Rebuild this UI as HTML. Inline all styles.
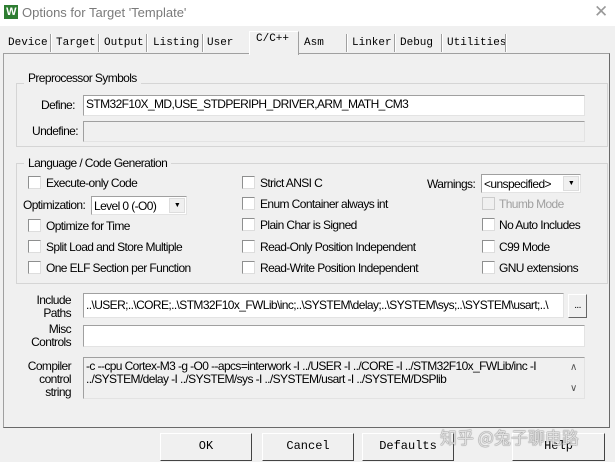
<!DOCTYPE html>
<html><head><meta charset="utf-8"><style>
*{margin:0;padding:0;box-sizing:border-box}
body{width:615px;height:462px;background:#f0f0f0;position:relative;overflow:hidden;font-family:"Liberation Sans",Arial,sans-serif;font-size:12px;letter-spacing:-0.6px;color:#000}
.a{position:absolute;white-space:nowrap}
.title{left:0;top:0;width:615px;height:26px;background:#fff}
.tab{font-family:"Liberation Mono",monospace;font-size:11px;letter-spacing:0;top:37px}
.sep{position:absolute;top:34px;width:2px;height:18px;border-left:1px solid #a0a0a0;border-right:1px solid #fff}
.panel{left:3px;top:53px;width:607px;height:375px;border:1px solid #a0a0a0;border-right-color:#696969;border-bottom-color:#696969;background:#f0f0f0}
.grp{border:1px solid #d5d5d5;position:absolute}
.gl{background:#f0f0f0;padding:0 4px}
.in{position:absolute;background:#fff;border:1px solid #a0a0a0;border-right-color:#e3e3e3;border-bottom-color:#e3e3e3;padding:1px 2px;overflow:hidden;white-space:nowrap}
.cb{position:absolute;width:13px;height:13px;background:#fff;border:1px solid #8e8f8f;border-right-color:#ddd;border-bottom-color:#ddd}
.btn{position:absolute;top:433px;height:28px;border:1px solid #fff;border-right-color:#444;border-bottom-color:#444;background:#f0f0f0;font-family:"Liberation Mono",monospace;font-size:12px;letter-spacing:0;text-align:center;line-height:24px}
.dd{position:absolute;width:16px;height:15px;top:1px;right:1px;background:#f0f0f0;border:1px solid #ddd;font-size:7px;text-align:center;line-height:14px}
</style></head><body>
<div class="a title"></div>
<div class="a" style="left:4px;top:5px;width:14px;height:14px;background:#2e7d32;color:#fff;font-size:11px;font-weight:bold;line-height:14px;text-align:center">W</div>
<div class="a" style="left:22px;top:5px;font-size:13px;color:#7a7a7a;letter-spacing:0">Options for Target 'Template'</div>
<div class="a" style="left:594px;top:2px;font-size:17px;color:#999">✕</div>

<div class="a panel"></div>
<div class="a" style="left:249px;top:31px;width:50px;height:24px;background:#f0f0f0;border:1px solid #fff;border-bottom:none;border-right-color:#a0a0a0"></div>
<div class="a tab" style="left:8px">Device</div><div class="sep" style="left:50px"></div>
<div class="a tab" style="left:56px">Target</div><div class="sep" style="left:98px"></div>
<div class="a tab" style="left:104px">Output</div><div class="sep" style="left:146px"></div>
<div class="a tab" style="left:153px">Listing</div><div class="sep" style="left:202px"></div>
<div class="a tab" style="left:207px">User</div>
<div class="a tab" style="left:256px;top:33px">C/C++</div>
<div class="a tab" style="left:304px">Asm</div><div class="sep" style="left:346px"></div>
<div class="a tab" style="left:352px">Linker</div><div class="sep" style="left:394px"></div>
<div class="a tab" style="left:400px">Debug</div><div class="sep" style="left:441px"></div>
<div class="a tab" style="left:447px">Utilities</div><div class="sep" style="left:505px"></div>

<div class="grp" style="left:16px;top:83px;width:592px;height:64px"></div>
<div class="a gl" style="left:24px;top:71px">Preprocessor Symbols</div>
<div class="a" style="left:41px;top:98px">Define:</div>
<div class="in" style="left:83px;top:95px;width:502px;height:21px">STM32F10X_MD,USE_STDPERIPH_DRIVER,ARM_MATH_CM3</div>
<div class="a" style="left:32px;top:124px">Undefine:</div>
<div class="in" style="left:83px;top:121px;width:502px;height:21px;background:#f0f0f0"></div>

<div class="grp" style="left:16px;top:163px;width:592px;height:121px"></div>
<div class="a gl" style="left:24px;top:156px">Language / Code Generation</div>

<div class="cb" style="left:28px;top:176px"></div><div class="a" style="left:46px;top:176px">Execute-only Code</div>
<div class="a" style="left:23px;top:198px">Optimization:</div>
<div class="in" style="left:91px;top:196px;width:96px;height:19px;padding-top:2px">Level 0 (-O0)<div class="dd">▼</div></div>
<div class="cb" style="left:28px;top:219px"></div><div class="a" style="left:46px;top:219px">Optimize for Time</div>
<div class="cb" style="left:28px;top:240px"></div><div class="a" style="left:46px;top:240px">Split Load and Store Multiple</div>
<div class="cb" style="left:28px;top:261px"></div><div class="a" style="left:46px;top:261px">One ELF Section per Function</div>

<div class="cb" style="left:242px;top:176px"></div><div class="a" style="left:260px;top:176px">Strict ANSI C</div>
<div class="cb" style="left:242px;top:197px"></div><div class="a" style="left:260px;top:197px">Enum Container always int</div>
<div class="cb" style="left:242px;top:218px"></div><div class="a" style="left:260px;top:218px">Plain Char is Signed</div>
<div class="cb" style="left:242px;top:240px"></div><div class="a" style="left:260px;top:240px">Read-Only Position Independent</div>
<div class="cb" style="left:242px;top:261px"></div><div class="a" style="left:260px;top:261px">Read-Write Position Independent</div>

<div class="a" style="left:427px;top:177px">Warnings:</div>
<div class="in" style="left:481px;top:174px;width:100px;height:19px;padding-top:2px">&lt;unspecified&gt;<div class="dd">▼</div></div>
<div class="cb" style="left:482px;top:197px;background:#f0f0f0;border-color:#ccc"></div><div class="a" style="left:499px;top:197px;color:#a0a0a0">Thumb Mode</div>
<div class="cb" style="left:482px;top:218px"></div><div class="a" style="left:499px;top:218px">No Auto Includes</div>
<div class="cb" style="left:482px;top:240px"></div><div class="a" style="left:499px;top:240px">C99 Mode</div>
<div class="cb" style="left:482px;top:261px"></div><div class="a" style="left:499px;top:261px">GNU extensions</div>

<div class="a" style="left:36px;top:294px;text-align:right;width:35px;line-height:13px">Include<br>Paths</div>
<div class="in" style="left:83px;top:293px;width:481px;height:25px;padding-top:4px">..\USER;..\CORE;..\STM32F10x_FWLib\inc;..\SYSTEM\delay;..\SYSTEM\sys;..\SYSTEM\usart;..\</div>
<div class="a" style="left:568px;top:294px;width:19px;height:24px;border:1px solid #fff;border-right-color:#666;border-bottom-color:#666;text-align:center;font-size:10px;line-height:22px">...</div>
<div class="a" style="left:20px;top:323px;text-align:right;width:51px;line-height:13px">Misc<br>Controls</div>
<div class="in" style="left:83px;top:325px;width:502px;height:22px"></div>
<div class="a" style="left:20px;top:360px;text-align:right;width:51px;line-height:13px">Compiler<br>control<br>string</div>
<div class="in" style="left:83px;top:357px;width:502px;height:42px;background:#f0f0f0;white-space:normal;line-height:13px;padding:2px 20px 0 2px">-c --cpu Cortex-M3 -g -O0 --apcs=interwork -I ../USER -I ../CORE -I ../STM32F10x_FWLib/inc -I ../SYSTEM/delay -I ../SYSTEM/sys -I ../SYSTEM/usart -I ../SYSTEM/DSPlib</div>
<div class="a" style="left:570px;top:362px;font-size:10px;color:#555">&#x2227;</div>
<div class="a" style="left:570px;top:383px;font-size:10px;color:#555">&#x2228;</div>

<div class="btn" style="left:160px;width:92px">OK</div>
<div class="btn" style="left:262px;width:92px">Cancel</div>
<div class="btn" style="left:362px;width:92px">Defaults</div>
<div class="btn" style="left:512px;width:93px">Help</div>
<div class="a" style="left:440px;top:424px;font-family:'Noto Sans CJK SC',sans-serif;font-size:17px;letter-spacing:0;color:rgba(235,235,235,0.9);text-shadow:0 0 1px #777,0 0 1px #777">知乎 @兔子聊电路</div>
</body></html>
